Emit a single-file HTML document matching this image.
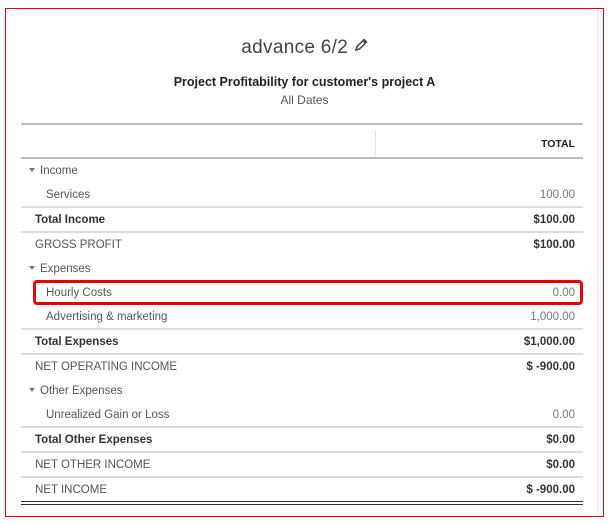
<!DOCTYPE html>
<html><head><style>
body{margin:0;width:609px;height:524px;background:#fff;font-family:"Liberation Sans",sans-serif;position:relative;overflow:hidden}
.a{position:absolute}
.t{position:absolute;font-size:11.5px;color:#555;white-space:nowrap;line-height:14px}
.b{font-weight:bold;color:#333}
.r{right:34px;text-align:right}
.ln{position:absolute;left:21px;width:562px;height:1px;background:#ddd}
.car{display:inline-block;width:0;height:0;border-left:3.5px solid transparent;border-right:3.5px solid transparent;border-top:4px solid #777;margin-right:5px;vertical-align:2px}
</style></head><body>
<div class="a" style="left:5px;top:8px;width:597px;height:507px;border:1px solid #e00"></div>
<div class="a" style="left:597px;top:9px;width:1px;height:506px;background:#e6e9ee"></div>
<div class="a" style="left:0;width:609px;top:37px;text-align:center;font-size:19px;color:#444;letter-spacing:.3px">advance 6/2 <svg width="14" height="14" viewBox="0 0 14 14" style="vertical-align:1px"><path d="M2 12 L3 8.5 L10 1.5 L12.5 4 L5.5 11 Z M9 2.5 L11.5 5" fill="none" stroke="#444" stroke-width="1.5"/></svg></div>
<div class="a" style="left:0;width:609px;top:75px;text-align:center;font-size:12.5px;font-weight:bold;color:#222">Project Profitability for customer's project A</div>
<div class="a" style="left:0;width:609px;top:93px;text-align:center;font-size:12px;color:#555">All Dates</div>
<div class="ln" style="top:123px;height:2px;background:#bbb"></div>
<div class="a" style="left:375px;top:131px;width:1px;height:25px;border-left:1px dotted #ccc"></div>
<div class="t b r" style="top:137px;font-size:10.5px;color:#222">TOTAL</div>
<div class="ln" style="top:157px;height:2px;background:#bbb"></div>

<div class="t" style="left:29px;top:164px"><span class="car"></span>Income</div>
<div class="t" style="left:46px;top:188px">Services</div><div class="t r" style="top:188px;color:#777">100.00</div>
<div class="ln" style="top:206px;height:2px"></div>
<div class="t b" style="left:35px;top:213px">Total Income</div><div class="t b r" style="top:213px">$100.00</div>
<div class="ln" style="top:231px;height:2px"></div>
<div class="t" style="left:35px;top:238px">GROSS PROFIT</div><div class="t b r" style="top:238px">$100.00</div>
<div class="t" style="left:29px;top:262px"><span class="car"></span>Expenses</div>
<div class="a" style="left:33px;top:280px;width:544px;height:19px;border:3px solid #e00;border-radius:4px"></div>
<div class="t" style="left:46px;top:286px">Hourly Costs</div><div class="t r" style="top:286px;color:#777">0.00</div>
<div class="t" style="left:46px;top:310px">Advertising &amp; marketing</div><div class="t r" style="top:310px;color:#777">1,000.00</div>
<div class="ln" style="top:328px;height:2px"></div>
<div class="t b" style="left:35px;top:335px">Total Expenses</div><div class="t b r" style="top:335px">$1,000.00</div>
<div class="ln" style="top:353px;height:2px"></div>
<div class="t" style="left:35px;top:360px">NET OPERATING INCOME</div><div class="t b r" style="top:360px">$ -900.00</div>
<div class="t" style="left:29px;top:384px"><span class="car"></span>Other Expenses</div>
<div class="t" style="left:46px;top:408px">Unrealized Gain or Loss</div><div class="t r" style="top:408px;color:#777">0.00</div>
<div class="ln" style="top:426px;height:2px"></div>
<div class="t b" style="left:35px;top:433px">Total Other Expenses</div><div class="t b r" style="top:433px">$0.00</div>
<div class="ln" style="top:451px;height:2px"></div>
<div class="t" style="left:35px;top:458px">NET OTHER INCOME</div><div class="t b r" style="top:458px">$0.00</div>
<div class="ln" style="top:476px;height:2px"></div>
<div class="t" style="left:35px;top:483px">NET INCOME</div><div class="t b r" style="top:483px">$ -900.00</div>
<div class="ln" style="top:501px;height:1px;background:#333"></div>
<div class="ln" style="top:504px;height:1px;background:#333"></div>
</body></html>
